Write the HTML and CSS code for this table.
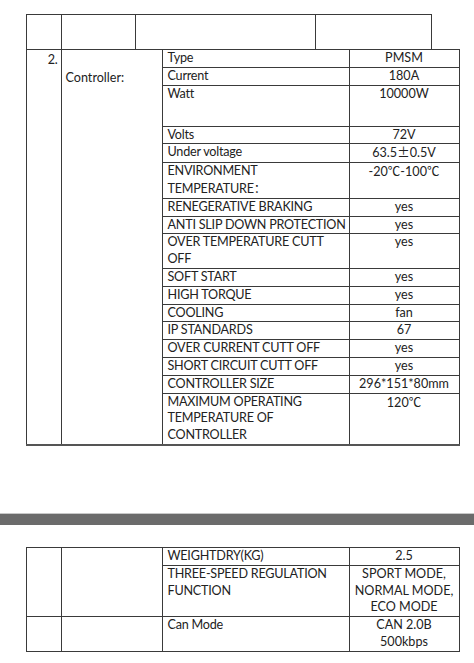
FILE: index.html
```html
<!DOCTYPE html>
<html lang="en">
<head>
<meta charset="utf-8">
<title>Controller specification</title>
<link rel="stylesheet" href="styles.css">
</head>
<body>
<main class="page">
  <table class="grid grid-top">
    <colgroup><col class="c1"><col class="c2t"><col class="c3t"><col class="c4t"></colgroup>
    <tr class="top-row"><td></td><td></td><td></td><td></td></tr>
  </table>

  <table class="grid grid-main">
    <colgroup><col class="c1"><col class="c2"><col class="c3"><col class="c4"></colgroup>
    <tr>
      <td class="num" rowspan="17">2.</td>
      <td class="group" rowspan="17">Controller:</td>
      <td class="key">Type</td><td class="val">PMSM</td>
    </tr>
    <tr><td class="key">Current</td><td class="val">180A</td></tr>
    <tr class="tall"><td class="key">Watt</td><td class="val">10000W</td></tr>
    <tr><td class="key">Volts</td><td class="val">72V</td></tr>
    <tr><td class="key">Under voltage</td><td class="val">63.5<span class="cjk">±</span>0.5V</td></tr>
    <tr><td class="key">ENVIRONMENT<br>TEMPERATURE<span class="cjk">：</span></td><td class="val">-20<span class="cjk">℃</span>-100<span class="cjk">℃</span></td></tr>
    <tr><td class="key">RENEGERATIVE BRAKING</td><td class="val">yes</td></tr>
    <tr><td class="key">ANTI SLIP DOWN PROTECTION</td><td class="val">yes</td></tr>
    <tr><td class="key">OVER TEMPERATURE CUTT<br>OFF</td><td class="val">yes</td></tr>
    <tr><td class="key">SOFT START</td><td class="val">yes</td></tr>
    <tr><td class="key">HIGH TORQUE</td><td class="val">yes</td></tr>
    <tr><td class="key">COOLING</td><td class="val">fan</td></tr>
    <tr><td class="key">IP STANDARDS</td><td class="val">67</td></tr>
    <tr><td class="key">OVER CURRENT CUTT OFF</td><td class="val">yes</td></tr>
    <tr><td class="key">SHORT CIRCUIT CUTT OFF</td><td class="val">yes</td></tr>
    <tr><td class="key">CONTROLLER SIZE</td><td class="val">296*151*80mm</td></tr>
    <tr><td class="key">MAXIMUM OPERATING<br>TEMPERATURE OF<br>CONTROLLER</td><td class="val">120<span class="cjk">℃</span></td></tr>
  </table>

  <div class="band"></div>

  <table class="grid grid-bottom">
    <colgroup><col class="c1"><col class="c2"><col class="c3"><col class="c4"></colgroup>
    <tr>
      <td rowspan="2"></td>
      <td rowspan="2"></td>
      <td class="key">WEIGHTDRY(KG)</td><td class="val">2.5</td>
    </tr>
    <tr><td class="key">THREE-SPEED REGULATION<br>FUNCTION</td><td class="val">SPORT MODE,<br>NORMAL MODE,<br>ECO MODE</td></tr>
    <tr><td></td><td></td><td class="key">Can Mode</td><td class="val">CAN 2.0B<br>500kbps</td></tr>
  </table>
</main>
</body>
</html>
```

FILE: styles.css
```css
html, body {
  margin: 0;
  padding: 0;
  background: #ffffff;
}

body {
  font-family: Lato, "Noto Sans", sans-serif;
  font-size: 12.6px;
  letter-spacing: -0.22px;
  color: #222222;
}

.page {
  padding: 14px 0 0 26px;
}

.grid {
  border-collapse: collapse;
  table-layout: fixed;
}

.grid td {
  border: 1px solid #3a3a3a;
  padding: 0 3px 0 5px;
  line-height: 16.8px;
  vertical-align: top;
  white-space: nowrap;
}

.grid-top {
  width: 405px;
}

.top-row td {
  height: 34px;
  padding: 0;
}

.c1 { width: 34.5px; }
.c2 { width: 101px; }
.c3 { width: 187px; }
.c4 { width: 110px; }

.c2t { width: 74.5px; }
.c3t { width: 180px; }
.c4t { width: 116px; }

.grid-main,
.grid-bottom {
  width: 432.5px;
}

.grid-main {
  margin-top: -1px;
}

.grid-main tr:last-child td {
  border-bottom: 2px solid #555555;
}

.grid-main td.num,
.grid-main td.group {
  border-bottom: 2px solid #555555;
}

.grid td.num {
  text-align: right;
  padding: 2px 3px 0 0;
}

.grid td.group {
  padding: 20px 0 0 4px;
  letter-spacing: 0;
}

.grid td.val {
  text-align: center;
  padding: 0 2px;
  letter-spacing: 0;
}

.tall td {
  height: 40px;
}

.cjk {
  font-family: "Noto Sans CJK SC", sans-serif;
  font-size: 12.5px;
}

.band {
  margin: 67px 0 0 -26px;
  height: 11px;
  background: #6b6b6b;
  border-top: 1px solid #c8c8c8;
}

.grid-bottom {
  margin-top: 22px;
}
```
